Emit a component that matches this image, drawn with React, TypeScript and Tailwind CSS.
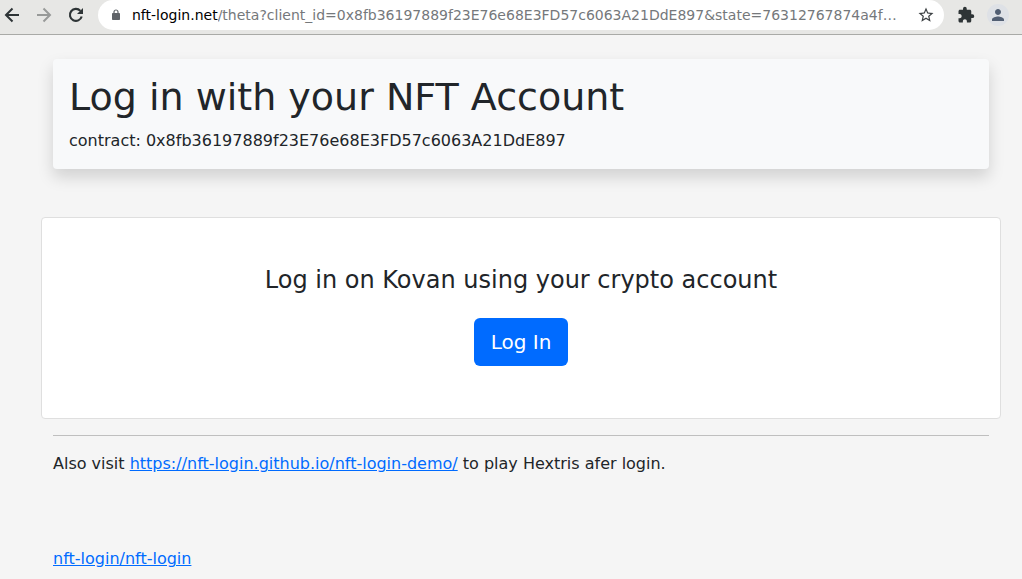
import React, { useState } from 'react';
import { MdExtension, MdPerson, MdStarBorder } from 'react-icons/md';

const contract = '0x8fb36197889f23E76e68E3FD57c6063A21DdE897';

const BackIcon = () => (
  <svg width="22" height="22" viewBox="0 0 22 22" fill="none" stroke="currentColor" strokeWidth="2">
    <path d="M18 11H5.5M11.5 4.5L5 11l6.5 6.5" />
  </svg>
);

const ForwardIcon = () => (
  <svg width="22" height="22" viewBox="0 0 22 22" fill="none" stroke="currentColor" strokeWidth="2">
    <path d="M4 11h12.5M10.5 4.5L17 11l-6.5 6.5" />
  </svg>
);

const ReloadIcon = () => (
  <svg width="22" height="22" viewBox="0 0 22 22">
    <path d="M16.7 12.5A6 6 0 1 1 15.4 6.9" fill="none" stroke="currentColor" strokeWidth="2.1" />
    <path d="M18 4v6h-6z" fill="currentColor" />
  </svg>
);

const LockIcon = () => (
  <svg width="8" height="12" viewBox="0 0 8 12" className="shrink-0 mr-3" aria-hidden="true">
    <path d="M2 5V3a2 2 0 0 1 4 0v2" fill="none" stroke="#5f6368" strokeWidth="1.2" />
    <rect y="4" width="8" height="7" rx="0.8" fill="#5f6368" />
  </svg>
);

const BrowserBar = () => {
  const [path, setPath] = useState(`/theta?client_id=${contract}&state=76312767874a4f…`);

  return (
    <header className="flex items-start gap-[11px] h-[35px] pr-[13px] bg-[#e7e7e5] border-b border-[#a9aaa7]">
      <nav className="flex items-center gap-2.5 h-[30px] pl-px">
        <button type="button" aria-label="Back" className="text-[#2e3436]">
          <BackIcon />
        </button>
        <button type="button" aria-label="Forward" className="text-[#989a99]">
          <ForwardIcon />
        </button>
        <button type="button" aria-label="Reload" className="text-[#2e3436]">
          <ReloadIcon />
        </button>
      </nav>

      <div className="flex flex-1 items-center h-[30px] min-w-0 pl-3.5 pr-[9px] rounded-full bg-white text-sm">
        <LockIcon />
        <label htmlFor="path" className="text-black">nft-login.net</label>
        <input
          id="path"
          type="text"
          value={path}
          onChange={(e) => setPath(e.target.value)}
          className="flex-1 min-w-0 mr-2 text-[#75787b] text-ellipsis outline-none"
        />
        <button type="button" aria-label="Bookmark" className="text-[#3c4043]">
          <MdStarBorder size={18} />
        </button>
      </div>

      <div className="flex items-center gap-3 h-[30px] pl-0.5">
        <button type="button" aria-label="Extensions" className="text-[#2e3436]">
          <MdExtension size={18} />
        </button>
        <button
          type="button"
          aria-label="Profile"
          className="flex items-center justify-center w-[22px] h-[22px] rounded-full bg-[#dee1e6] text-[#525f73]"
        >
          <MdPerson size={18} />
        </button>
      </div>
    </header>
  );
};

function App() {
  return (
    <div className="min-h-screen bg-[#f5f5f5] text-[#212529] font-['DejaVu_Sans',sans-serif]">
      <BrowserBar />

      <div className="pl-5">
        <main className="max-w-[960px] mx-auto pt-6">
          <section className="mx-3 mb-12 p-4 rounded bg-[#f8f9fa] shadow-[0_8px_16px_rgba(0,0,0,0.15)]">
            <h1 className="mb-2.5 text-[38px] leading-11">Log in with your NFT Account</h1>
            <p>contract: {contract}</p>
          </section>

          <section className="flex flex-col items-center gap-6 pt-12 pb-[52px] rounded border border-[#dfdfdf] bg-white">
            <h2 className="text-2xl leading-7">Log in on Kovan using your crypto account</h2>
            <button type="button" className="h-12 px-[17px] rounded-md bg-[#006bff] hover:bg-blue-700 text-xl text-white">
              Log In
            </button>
          </section>

          <hr className="mx-3 my-4 border-[#bfbfbf]" />

          <p className="mx-3 mb-[71px]">
            Also visit{' '}
            <a href="https://nft-login.github.io/nft-login-demo/" className="text-[#006bff] underline">
              https://nft-login.github.io/nft-login-demo/
            </a>{' '}
            to play Hextris afer login.
          </p>
        </main>

        <footer className="max-w-[960px] mx-auto px-3 pb-2">
          <a href="https://github.com/nft-login/nft-login" className="text-[#006bff] underline">
            nft-login/nft-login
          </a>
        </footer>
      </div>
    </div>
  );
}

export default App;
